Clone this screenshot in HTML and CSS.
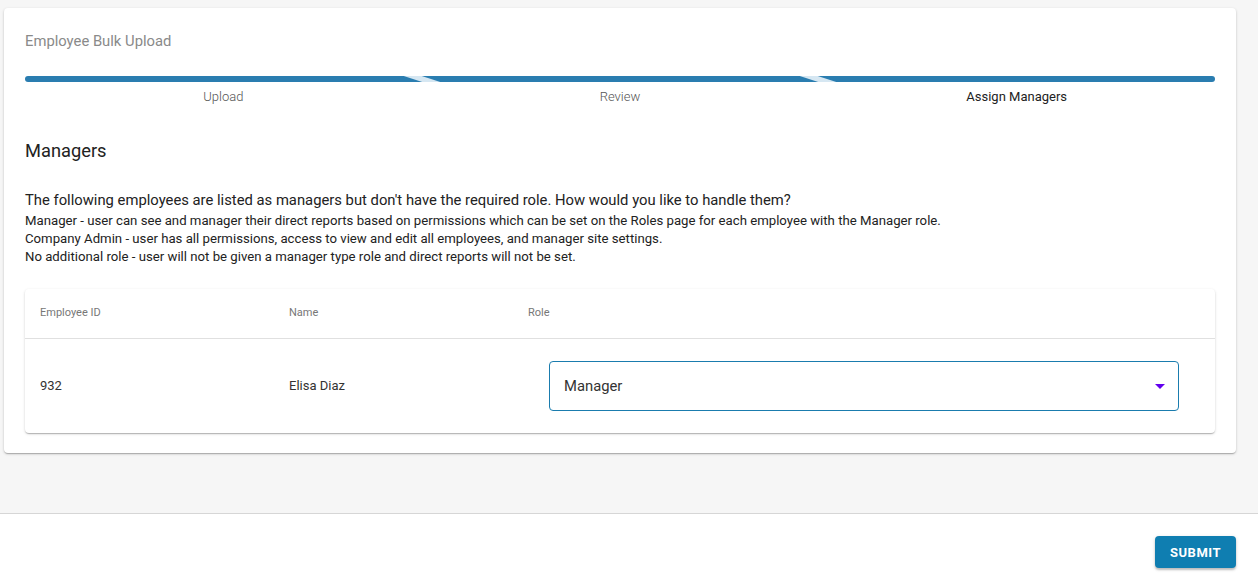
FILE: index.html
```html
<!DOCTYPE html>
<html lang="en">
<head>
<meta charset="utf-8">
<title>Employee Bulk Upload</title>
<link rel="stylesheet" href="styles.css">
</head>
<body>
<div class="page">
  <main class="main">
    <section class="card">
      <div class="card-title">Employee Bulk Upload</div>
      <div class="stepper">
        <div class="bar">
          <span class="sep sep-1"></span>
          <span class="sep sep-2"></span>
        </div>
        <div class="step-labels">
          <span class="step">Upload</span>
          <span class="step">Review</span>
          <span class="step active">Assign Managers</span>
        </div>
      </div>
      <h2 class="heading">Managers</h2>
      <p class="lead">The following employees are listed as managers but don't have the required role. How would you like to handle them?</p>
      <div class="notes">
        <div>Manager - user can see and manager their direct reports based on permissions which can be set on the Roles page for each employee with the Manager role.</div>
        <div>Company Admin - user has all permissions, access to view and edit all employees, and manager site settings.</div>
        <div>No additional role - user will not be given a manager type role and direct reports will not be set.</div>
      </div>
      <div class="table">
        <div class="row head">
          <div class="cell">Employee ID</div>
          <div class="cell">Name</div>
          <div class="cell">Role</div>
        </div>
        <div class="row body-row">
          <div class="cell">932</div>
          <div class="cell">Elisa Diaz</div>
          <div class="cell role-cell">
            <div class="select">
              <span>Manager</span>
              <svg class="arrow" width="10" height="5" viewBox="0 0 10 5"><path d="M0 0h10L5 5z" fill="#6200ee"/></svg>
            </div>
          </div>
        </div>
      </div>
    </section>
  </main>
  <footer class="footer">
    <button class="submit" type="button">SUBMIT</button>
  </footer>
</div>
</body>
</html>
```
FILE: styles.css
```css
* { box-sizing: border-box; }
html, body {
  margin: 0;
  padding: 0;
}
body {
  background: #f6f6f6;
  font-family: Roboto, "Noto Sans", Arial, sans-serif;
  color: #222;
}
.page {
  height: 573px;
  display: flex;
  flex-direction: column;
}
.main {
  flex: 1;
  padding: 8px 22px 0 4px;
}
.card {
  background: #fff;
  border-radius: 4px;
  box-shadow: 0 1px 3px rgba(0,0,0,0.18), 0 1px 1px rgba(0,0,0,0.12), 0 2px 1px -1px rgba(0,0,0,0.1);
  padding: 23px 21px 20px 21px;
}
.card-title {
  font-size: 14.8px;
  line-height: 20px;
  color: #8a8a8a;
}
.stepper {
  margin-top: 25px;
}
.bar {
  position: relative;
  height: 6px;
  border-radius: 3px;
  background: #2a7db0;
  overflow: hidden;
}
.sep {
  position: absolute;
  top: 0;
  width: 18px;
  height: 6px;
  background: #d6e7f2;
  transform: translateX(-50%) skewX(72deg);
}
.sep-1 { left: 33.333%; }
.sep-2 { left: 66.667%; }
.step-labels {
  display: grid;
  grid-template-columns: 1fr 1fr 1fr;
  margin-top: 7px;
}
.step {
  text-align: center;
  font-size: 13px;
  line-height: 16px;
  color: #555;
  font-weight: 300;
}
.step.active {
  color: #222;
  font-weight: 400;
}
.heading {
  margin: 34px 0 0;
  font-size: 18.3px;
  line-height: 24px;
  font-weight: 400;
  color: #222;
}
.lead {
  margin: 27px 0 0;
  font-size: 14.8px;
  line-height: 20px;
  color: #222;
}
.notes {
  margin-top: 2px;
  font-size: 13.2px;
  line-height: 18px;
  color: #222;
}
.table {
  margin-top: 23px;
  background: #fff;
  border-radius: 4px;
  box-shadow: 0 1px 3px rgba(0,0,0,0.16), 0 1px 1px rgba(0,0,0,0.1), 0 2px 1px -1px rgba(0,0,0,0.12);
}
.row {
  display: grid;
  grid-template-columns: 249px 239px 1fr;
  align-items: center;
  padding-left: 15px;
}
.row.head {
  height: 50px;
  border-bottom: 1px solid #e0e0e0;
}
.row.head .cell {
  font-size: 11px;
  color: #777;
  margin-top: -2px;
}
.body-row {
  height: 94px;
  font-size: 13px;
  color: #333;
}
.body-row .cell {
  margin-top: -1px;
}
.body-row .role-cell {
  margin-top: 0;
}
.role-cell {
  padding: 0 36px 0 21px;
}
.select {
  height: 50px;
  border: 1px solid #1a7cae;
  border-radius: 4px;
  display: flex;
  align-items: center;
  justify-content: space-between;
  padding: 0 13px 0 14px;
  font-size: 14.8px;
  color: #333;
}
.arrow { display: block; }
.footer {
  height: 60px;
  background: #fff;
  border-top: 1px solid #d6d6d6;
  display: flex;
  justify-content: flex-end;
  align-items: flex-start;
  padding: 22px 22px 0 0;
}
.submit {
  width: 81px;
  height: 32px;
  border: none;
  border-radius: 4px;
  background: #0f7eb1;
  color: #fff;
  font-family: Roboto, "Noto Sans", Arial, sans-serif;
  font-size: 13px;
  font-weight: 700;
  letter-spacing: 0.5px;
  box-shadow: 0 2px 2px rgba(0,0,0,0.2), 0 1px 4px rgba(0,0,0,0.12);
  padding: 0;
}
```
